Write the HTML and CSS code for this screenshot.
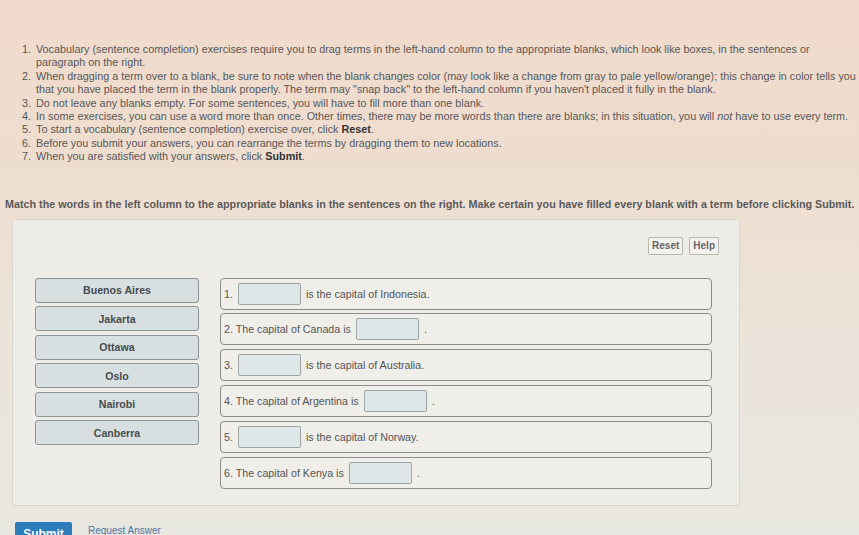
FILE: index.html
```html
<!DOCTYPE html>
<html>
<head>
<meta charset="utf-8">
<link rel="stylesheet" href="styles.css">
</head>
<body>
<div class="page">
  <ol class="steps">
    <li><span class="num">1.</span><span class="txt">Vocabulary (sentence completion) exercises require you to drag terms in the left-hand column to the appropriate blanks, which look like boxes, in the sentences or paragraph on the right.</span></li>
    <li><span class="num">2.</span><span class="txt">When dragging a term over to a blank, be sure to note when the blank changes color (may look like a change from gray to pale yellow/orange); this change in color tells you that you have placed the term in the blank properly. The term may "snap back" to the left-hand column if you haven't placed it fully in the blank.</span></li>
    <li><span class="num">3.</span><span class="txt">Do not leave any blanks empty. For some sentences, you will have to fill more than one blank.</span></li>
    <li><span class="num">4.</span><span class="txt">In some exercises, you can use a word more than once. Other times, there may be more words than there are blanks; in this situation, you will <em>not</em> have to use every term.</span></li>
    <li><span class="num">5.</span><span class="txt">To start a vocabulary (sentence completion) exercise over, click <b>Reset</b>.</span></li>
    <li><span class="num">6.</span><span class="txt">Before you submit your answers, you can rearrange the terms by dragging them to new locations.</span></li>
    <li><span class="num">7.</span><span class="txt">When you are satisfied with your answers, click <b>Submit</b>.</span></li>
  </ol>

  <p class="prompt">Match the words in the left column to the appropriate blanks in the sentences on the right. Make certain you have filled every blank with a term before clicking Submit.</p>

  <div class="panel">
    <div class="toolbar">
      <button class="tool">Reset</button>
      <button class="tool">Help</button>
    </div>
    <div class="work">
      <div class="terms">
        <div class="term">Buenos Aires</div>
        <div class="term">Jakarta</div>
        <div class="term">Ottawa</div>
        <div class="term">Oslo</div>
        <div class="term">Nairobi</div>
        <div class="term">Canberra</div>
      </div>
      <div class="sentences">
        <div class="sentence"><span>1.</span><span class="blank"></span><span>is the capital of Indonesia.</span></div>
        <div class="sentence"><span>2. The capital of Canada is</span><span class="blank"></span><span>.</span></div>
        <div class="sentence"><span>3.</span><span class="blank"></span><span>is the capital of Australia.</span></div>
        <div class="sentence"><span>4. The capital of Argentina is</span><span class="blank"></span><span>.</span></div>
        <div class="sentence"><span>5.</span><span class="blank"></span><span>is the capital of Norway.</span></div>
        <div class="sentence"><span>6. The capital of Kenya is</span><span class="blank"></span><span>.</span></div>
      </div>
    </div>
  </div>

  <div class="footer">
    <button class="submit">Submit</button>
    <a class="request" href="#">Request Answer</a>
  </div>
</div>
</body>
</html>
```

FILE: styles.css
```css
html, body {
  margin: 0;
  padding: 0;
  height: 100%;
  overflow: hidden;
}
body {
  background: linear-gradient(180deg, #f0dacb 0%, #eeded0 35%, #ebe4da 65%, #e9e7e1 100%);
  font-family: "Liberation Sans", Arial, sans-serif;
  color: #575757;
}
.page {
  padding: 43px 0 0 0;
}
.steps {
  list-style: none;
  margin: 0;
  padding: 0 1px 0 22px;
  font-size: 10.8px;
  line-height: 13.4px;
}
.steps li {
  display: flex;
}
.num {
  flex: 0 0 14px;
}
.txt b {
  color: #333;
}
.prompt {
  margin: 33px 0 0 5px;
  font-size: 10.75px;
  line-height: 14px;
  font-weight: bold;
  color: #5a5a5a;
  white-space: nowrap;
}
.panel {
  margin: 8px 0 0 12px;
  width: 728px;
  height: 287px;
  box-sizing: border-box;
  background: #eeece6;
  border: 1px solid #d9d5cd;
  border-radius: 2px;
  padding: 17px 20px 0 22px;
}
.toolbar {
  display: flex;
  justify-content: flex-end;
  gap: 6px;
}
.tool {
  height: 18px;
  padding: 0 3px;
  font-family: "Liberation Sans", Arial, sans-serif;
  font-size: 10px;
  font-weight: bold;
  color: #666;
  background: #f3f1ed;
  border: 1px solid #b9b7b2;
  border-radius: 2px;
}
.work {
  display: flex;
  gap: 21px;
  margin-top: 23px;
}
.terms {
  flex: 0 0 164px;
  display: flex;
  flex-direction: column;
  gap: 3.5px;
}
.term {
  height: 25px;
  box-sizing: border-box;
  display: flex;
  align-items: center;
  justify-content: center;
  background: #d8dfe0;
  border: 1.5px solid #8c9494;
  border-radius: 3px;
  font-size: 10.6px;
  font-weight: bold;
  color: #474c4e;
}
.sentences {
  flex: 0 0 492px;
  display: flex;
  flex-direction: column;
  gap: 3.8px;
}
.sentence {
  height: 32px;
  box-sizing: border-box;
  display: flex;
  align-items: center;
  gap: 5px;
  padding: 0 4px 0 3px;
  background: #efeee9;
  border: 1.5px solid #8b8d8d;
  border-radius: 4px;
  font-size: 10.7px;
  color: #555;
}
.blank {
  width: 63px;
  height: 22px;
  box-sizing: border-box;
  background: #dfe6e8;
  border: 1.5px solid #9ba6a8;
  border-radius: 2px;
}
.footer {
  display: flex;
  align-items: center;
  gap: 16px;
  margin: 16px 0 0 15px;
}
.submit {
  width: 57px;
  height: 24px;
  background: #2b7cba;
  color: #fff;
  border: none;
  border-radius: 2px;
  font-family: "Liberation Sans", Arial, sans-serif;
  font-size: 12px;
  font-weight: bold;
  padding: 0;
  align-self: flex-start;
}
.request {
  font-size: 10px;
  color: #4f74a4;
  text-decoration: underline;
  align-self: flex-start;
  margin-top: 3px;
}
```
